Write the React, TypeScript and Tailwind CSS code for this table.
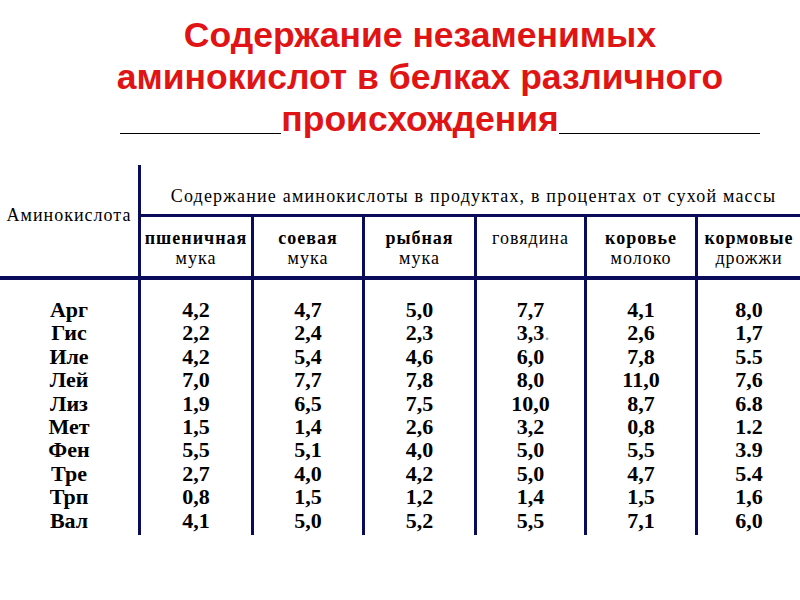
const navy = "border-[#0b0b5c]";

const columns = [
  { top: "пшеничная", bottom: "мука", bold: true },
  { top: "соевая", bottom: "мука", bold: true },
  { top: "рыбная", bottom: "мука", bold: true },
  { top: "говядина", bottom: "", bold: false },
  { top: "коровье", bottom: "молоко", bold: true },
  { top: "кормовые", bottom: "дрожжи", bold: true },
];

const acids = ["Арг", "Гис", "Иле", "Лей", "Лиз", "Мет", "Фен", "Тре", "Трп", "Вал"];

const values: string[][] = [
  ["4,2", "2,2", "4,2", "7,0", "1,9", "1,5", "5,5", "2,7", "0,8", "4,1"],
  ["4,7", "2,4", "5,4", "7,7", "6,5", "1,4", "5,1", "4,0", "1,5", "5,0"],
  ["5,0", "2,3", "4,6", "7,8", "7,5", "2,6", "4,0", "4,2", "1,2", "5,2"],
  ["7,7", "3,3", "6,0", "8,0", "10,0", "3,2", "5,0", "5,0", "1,4", "5,5"],
  ["4,1", "2,6", "7,8", "11,0", "8,7", "0,8", "5,5", "4,7", "1,5", "7,1"],
  ["8,0", "1,7", "5.5", "7,6", "6.8", "1.2", "3.9", "5.4", "1,6", "6,0"],
];

export default function App() {
  return (
    <div className="h-[600px] w-[800px] overflow-hidden bg-white">
      <h1 className="relative z-10 pl-[40px] pt-[14px] text-center font-['Liberation_Sans',Arial,sans-serif] text-[35.5px] font-bold leading-[42px] text-[#e01414]">
        Содержание незаменимых
        <br />
        аминокислот в белках различного
        <br />
        <span className="bg-white">происхождения</span>
      </h1>
      <div className="ml-[120px] -mt-[7px] w-[640px] border-t border-black" />

      <div className="mt-[31px] grid grid-cols-[141px_113px_111px_112px_110px_111px_102px] font-['Liberation_Serif','Times_New_Roman',serif] text-black">
        <div className={`row-span-2 border-r-[3px] border-b-4 ${navy} pt-[40px] text-center text-[18px] leading-[20px] tracking-[1px]`}>
          Аминокислота
        </div>
        <div className={`col-span-6 h-[52px] border-b-[3px] ${navy} pl-[6px] pt-[21px] text-center text-[18px] leading-[20px] tracking-[1.2px]`}>
          Содержание аминокислоты в продуктах, в процентах от сухой массы
        </div>
        {columns.map((c, i) => (
          <div
            key={c.top}
            className={`h-[63px] border-b-4 ${navy} pt-[11px] text-center text-[18px] leading-[20px] tracking-[1px] ${i < 5 ? "border-r-[3px]" : ""}`}
          >
            <div className={c.bold ? "font-bold" : ""}>{c.top}</div>
            {c.bottom && <div>{c.bottom}</div>}
          </div>
        ))}

        <div className={`h-[255px] border-r-[3px] ${navy} pt-[18px] text-center text-[22px] font-bold leading-[23.4px]`}>
          {acids.map((a) => (
            <div key={a}>{a}</div>
          ))}
        </div>
        {values.map((col, i) => (
          <div
            key={i}
            className={`h-[255px] ${navy} pt-[18px] text-center text-[22px] font-bold leading-[23.4px] ${i < 5 ? "border-r-[3px]" : ""}`}
          >
            {col.map((v, j) => (
              <div key={j}>
                {v}
                {i === 3 && j === 1 && <span className="absolute font-normal text-gray-400">.</span>}
              </div>
            ))}
          </div>
        ))}
      </div>
    </div>
  );
}
